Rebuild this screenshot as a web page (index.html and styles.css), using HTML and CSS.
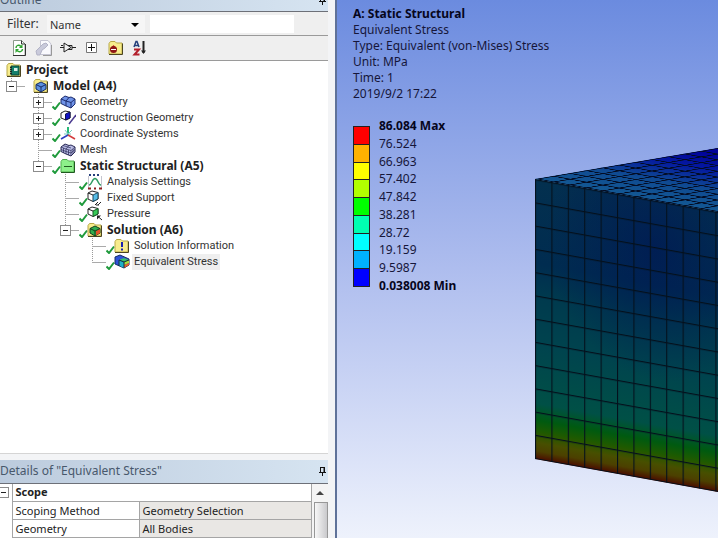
FILE: index.html
```html
<!DOCTYPE html>
<html lang="en">
<head>
    <meta charset="UTF-8">
    <meta name="viewport" content="width=device-width, initial-scale=1.0">
    <title>Mechanical</title>
    <link rel="stylesheet" href="styles.css">
</head>
<body>

<!-- shared icons -->
<svg class="defs" width="0" height="0">
    <symbol id="check" viewBox="0 0 9 9"><path d="M0.5 5.5L3 8L8 1.5" fill="none" stroke="#1f9a3c" stroke-width="2"/></symbol>
    <symbol id="folder" viewBox="0 0 16 16">
        <path d="M1 3.5L2.5 1.5H7L8.5 3H14V14H1Z" fill="#f7ec8c" stroke="#b9a848"/>
        <path d="M1 14.5H14.5V3.5" fill="none" stroke="#4b4520"/>
    </symbol>
    <symbol id="pin" viewBox="0 0 9 10"><path d="M2.5 1V6M2 1.5H7M1 6.5H8M4.5 7V10" fill="none" stroke="#111"/><path d="M5.5 1H7V6H5.5Z" fill="#111"/></symbol>
</svg>

<div class="app">
    <div class="sidebar">
        <section class="outline">
            <header class="panel-title">
                <span>Outline</span>
                <button class="pin-btn" aria-label="Pin outline"><svg width="9" height="10"><use href="#pin"/></svg></button>
            </header>

            <div class="filter-bar">
                <label for="filter">Filter:</label>
                <div class="select-wrap">
                    <select id="filter">
                        <option>Name</option>
                        <option>Tag</option>
                    </select>
                </div>
                <input type="text" class="filter-text" aria-label="Filter text">
            </div>

            <div class="toolbar">
                <button aria-label="Refresh">
                    <svg width="16" height="16" viewBox="0 0 16 16">
                        <path d="M2.5 0.5H10.5L14 4V15.5H2.5Z" fill="#fff" stroke="#8a9a8a"/>
                        <path d="M10.5 0.5V4H14M2 15.5H14.5V4" fill="none" stroke="#333"/>
                        <path d="M5 8C5 5 8 4.5 10 6.5M11.5 9C11.5 12 8 12.5 6 10.5" fill="none" stroke="#2fa52f" stroke-width="1.5"/>
                        <path d="M11.5 4V8H8ZM4.5 13V9H8Z" fill="#2fa52f"/>
                    </svg>
                </button>
                <button aria-label="Copy">
                    <svg width="17" height="16" viewBox="0 0 17 16">
                        <path d="M5.5 0.5H13L16 4V14.5H5.5Z" fill="#f9f9fd" stroke="#c5c5d2"/>
                        <path d="M1 11L8 4L11 3L13 5L10 8L7 10L5 15H2Z" fill="#c9cadb" stroke="#b2b3c6"/>
                        <path d="M8 15.5H16.5V5" fill="none" stroke="#999"/>
                    </svg>
                </button>
                <button aria-label="Connections">
                    <svg width="16" height="16" viewBox="0 0 16 16">
                        <path d="M0 7.5H4M4 3V12L11 7.5ZM3 5.5H1M8 5.5H12V9.5H8M12 7.5H16" fill="none" stroke="#222"/>
                    </svg>
                </button>
                <button aria-label="Expand all">
                    <svg width="16" height="16" viewBox="0 0 16 16">
                        <path d="M2.5 2.5H12.5V12.5H2.5Z" fill="#fff" stroke="#777"/>
                        <path d="M4 7.5H11M7.5 4V11" stroke="#111"/>
                    </svg>
                </button>
                <button aria-label="Hide">
                    <svg width="16" height="16" viewBox="0 0 16 16">
                        <use href="#folder"/>
                        <path d="M2 9H9L5.5 5Z" fill="#c31b1b"/>
                        <circle cx="5.5" cy="9.500" r="3.500" fill="#8e1515"/>
                        <path d="M3 9.500H8" stroke="#fff" stroke-width="1"/>
                    </svg>
                </button>
                <button aria-label="Sort">
                    <svg width="16" height="16" viewBox="0 0 16 16">
                        <path d="M2 7L4 1.5H5L7 7M3 5.5H7" fill="none" stroke="#26407c" stroke-width="1.5"/>
                        <path d="M2 9.500H7L2.5 14.5H7.5" fill="none" stroke="#b3202c" stroke-width="2"/>
                        <path d="M11.5 1V13" stroke="#222" stroke-width="2"/>
                        <path d="M9 10.5H14L11.5 14Z" fill="#222"/>
                    </svg>
                </button>
            </div>

            <div class="tree">
                <div class="row root">
                    <svg class="icon" width="16" height="16" viewBox="0 0 16 16">
                        <use href="#folder"/>
                        <path d="M5 4H13V13H5Z" fill="#14806a" stroke="#0b4438"/>
                        <path d="M8 6H11.5V9H8Z" fill="#d8efe6"/>
                        <path d="M4 5.5H6M4 7.5H6M4 9.5H6M4 11.5H6" stroke="#222"/>
                    </svg>
                    <strong>Project</strong>
                </div>
                <ul>
                    <li>
                        <div class="row">
                            <button class="toggle open" aria-label="Collapse"></button>
                            <span class="check"></span>
                            <svg class="icon" width="16" height="16" viewBox="0 0 16 16">
                                <use href="#folder"/>
                                <path d="M3 6.5L8 4L13 6.5V11L8 14L3 11Z" fill="#5b8fe0" stroke="#152c66"/>
                                <path d="M3 6.5L8 9L13 6.5M8 9V14" fill="none" stroke="#152c66"/>
                            </svg>
                            <strong>Model (A4)</strong>
                        </div>
                        <ul>
                            <li>
                                <div class="row">
                                    <button class="toggle" aria-label="Expand"></button>
                                    <svg class="check"><use href="#check"/></svg>
                                    <svg class="icon" width="16" height="16" viewBox="0 0 16 16">
                                        <path d="M1 5L5 2L9 3.5L11 3L15 5V10L11 14L6 12L1 9.5Z" fill="#6f93e8" stroke="#1d2c6e"/>
                                        <path d="M1 5L6 7L9 3.5M6 7V12M6 7L11 8.5L15 5M11 8.5V14" fill="none" stroke="#1d2c6e"/>
                                    </svg>
                                    <span>Geometry</span>
                                </div>
                            </li>
                            <li>
                                <div class="row">
                                    <button class="toggle" aria-label="Expand"></button>
                                    <svg class="check"><use href="#check"/></svg>
                                    <svg class="icon" width="16" height="16" viewBox="0 0 16 16">
                                        <path d="M1 3L5 1L10 2V8L6 10L1 8Z" fill="#fff" stroke="#222"/>
                                        <path d="M5.5 4L10 2V8L5.5 10Z" fill="#1414c8" stroke="#111150"/>
                                        <path d="M9 14L16 5" stroke="#4a3a90" stroke-width="1.5"/>
                                    </svg>
                                    <span>Construction Geometry</span>
                                </div>
                            </li>
                            <li>
                                <div class="row">
                                    <button class="toggle" aria-label="Expand"></button>
                                    <svg class="check"><use href="#check"/></svg>
                                    <svg class="icon" width="16" height="16" viewBox="0 0 16 16">
                                        <path d="M8 9V1" stroke="#28b878" stroke-width="2"/>
                                        <path d="M5 4L8 8L12 4M4 8H11" fill="none" stroke="#74cfc0"/>
                                        <path d="M8 9L1 13" stroke="#2a3ec0" stroke-width="1.5"/>
                                        <path d="M8 9L15 13" stroke="#d23b3b" stroke-width="1.5"/>
                                    </svg>
                                    <span>Coordinate Systems</span>
                                </div>
                            </li>
                            <li>
                                <div class="row">
                                    <span class="branch"></span>
                                    <svg class="check"><use href="#check"/></svg>
                                    <svg class="icon" width="16" height="16" viewBox="0 0 16 16">
                                        <path d="M1 5L5 2L9 3.5L11 3L15 5V10L11 14L6 12L1 9.5Z" fill="#b9bce6" stroke="#2a2a55"/>
                                        <path d="M1 5L6 7L9 3.5M6 7V12M6 7L11 8.5L15 5M11 8.5V14M1 7.5L6 9.5L11 11L15 7.5M3.5 6V11M8.5 8V13M13 7V12M3 3.5L11 6" fill="none" stroke="#2a2a55" stroke-width="0.7"/>
                                    </svg>
                                    <span>Mesh</span>
                                </div>
                            </li>
                            <li>
                                <div class="row">
                                    <button class="toggle open" aria-label="Collapse"></button>
                                    <svg class="check"><use href="#check"/></svg>
                                    <svg class="icon" width="16" height="16" viewBox="0 0 16 16">
                                        <path d="M1 3.5L2.5 1.5H7L8.5 3H14V14H1Z" fill="#8df08a" stroke="#4fae4c"/>
                                        <path d="M1 14.5H14.5V3.5M4 8.5H12" fill="none" stroke="#1f5a1f"/>
                                    </svg>
                                    <strong>Static Structural (A5)</strong>
                                </div>
                                <ul>
                                    <li>
                                        <div class="row">
                                            <span class="branch"></span>
                                            <svg class="check"><use href="#check"/></svg>
                                            <svg class="icon" width="16" height="16" viewBox="0 0 16 16">
                                                <path d="M1.5 2V14M14.5 2V14" stroke="#c5c5cf"/>
                                                <path d="M2 11C5 11 5 4.5 8 4.5C11 4.5 11 11 14 11" fill="none" stroke="#2f9a62" stroke-width="1.5"/>
                                                <path d="M2 1H4M6 1H8M10 1H12" stroke="#26407c" stroke-width="2"/>
                                                <path d="M1 14.5H4M7 14.5H9M12 14.5H15" stroke="#8e2020" stroke-width="2"/>
                                            </svg>
                                            <span>Analysis Settings</span>
                                        </div>
                                    </li>
                                    <li>
                                        <div class="row">
                                            <span class="branch"></span>
                                            <svg class="check"><use href="#check"/></svg>
                                            <svg class="icon" width="16" height="16" viewBox="0 0 16 16">
                                                <path d="M1 3L5 1L11 2.5V9L6 11.5L1 9Z" fill="#fff" stroke="#222"/>
                                                <path d="M6 5L11 2.5V9L6 11.5Z" fill="#55bde8" stroke="#1c4a60"/>
                                                <path d="M1 3L6 5M8 15L11 12M11 15L14 12M9 15H12" stroke="#222"/>
                                            </svg>
                                            <span>Fixed Support</span>
                                        </div>
                                    </li>
                                    <li>
                                        <div class="row">
                                            <span class="branch"></span>
                                            <svg class="check"><use href="#check"/></svg>
                                            <svg class="icon" width="16" height="16" viewBox="0 0 16 16">
                                                <path d="M1 3L5 1L11 2.5V8L6 10.5L1 8Z" fill="#fff" stroke="#222"/>
                                                <path d="M6 5L11 2.5V8L6 10.5Z" fill="#36c956" stroke="#145a24"/>
                                                <path d="M1 3L6 5M11 10.5L15 14" stroke="#222"/>
                                                <path d="M10 9.5H14L10 13.5Z" fill="#222"/>
                                            </svg>
                                            <span>Pressure</span>
                                        </div>
                                    </li>
                                    <li>
                                        <div class="row">
                                            <button class="toggle open" aria-label="Collapse"></button>
                                            <svg class="check"><use href="#check"/></svg>
                                            <svg class="icon" width="16" height="16" viewBox="0 0 16 16">
                                                <use href="#folder"/>
                                                <path d="M3 6.5L8 4L13 6.5V11L8 14L3 11Z" fill="#2fae4e" stroke="#173e1c"/>
                                                <path d="M9 9L13 7V11L9 13.5Z" fill="#e2542a"/>
                                                <path d="M3 6.5L8 9L13 6.5M8 9V14" fill="none" stroke="#173e1c"/>
                                            </svg>
                                            <strong>Solution (A6)</strong>
                                        </div>
                                        <ul>
                                            <li>
                                                <div class="row">
                                                    <span class="branch"></span>
                                                    <svg class="check"><use href="#check"/></svg>
                                                    <svg class="icon" width="16" height="16" viewBox="0 0 16 16">
                                                        <use href="#folder"/>
                                                        <path d="M8 4V9M8 10.5V12.5" stroke="#1a22b0" stroke-width="2"/>
                                                    </svg>
                                                    <span>Solution Information</span>
                                                </div>
                                            </li>
                                            <li>
                                                <div class="row selected">
                                                    <span class="branch"></span>
                                                    <svg class="check"><use href="#check"/></svg>
                                                    <svg class="icon" width="16" height="16" viewBox="0 0 16 16">
                                                        <path d="M1 3L6 1L15 5V11L10 14L1 10Z" fill="#2f52d8" stroke="#152c66"/>
                                                        <path d="M5 6L10 4L15 6L10 8Z" fill="#35c26a"/>
                                                        <path d="M5 6L10 8V14L5 11.5Z" fill="#1fb0c8"/>
                                                        <path d="M10 8L15 6V9L10 11Z" fill="#a6e03a"/>
                                                        <path d="M10 11L15 9V11L10 14Z" fill="#e8622a"/>
                                                        <path d="M5 6L10 8L15 6M10 8V14M5 6V12" fill="none" stroke="#152c3c"/>
                                                    </svg>
                                                    <span>Equivalent Stress</span>
                                                </div>
                                            </li>
                                        </ul>
                                    </li>
                                </ul>
                            </li>
                        </ul>
                    </li>
                </ul>
            </div>
        </section>

        <section class="details">
            <header class="panel-title">
                <span>Details of "Equivalent Stress"</span>
                <button class="pin-btn" aria-label="Pin details"><svg width="9" height="10"><use href="#pin"/></svg></button>
            </header>
            <div class="details-body">
                <table>
                    <colgroup>
                        <col class="col-gutter">
                        <col class="col-name">
                        <col>
                    </colgroup>
                    <tr>
                        <td class="gutter"><button class="toggle open" aria-label="Collapse"></button></td>
                        <th colspan="2">Scope</th>
                    </tr>
                    <tr>
                        <td class="gutter"></td>
                        <td>Scoping Method</td>
                        <td class="value">Geometry Selection</td>
                    </tr>
                    <tr>
                        <td class="gutter"></td>
                        <td>Geometry</td>
                        <td class="value">All Bodies</td>
                    </tr>
                </table>
                <div class="scrollbar">
                    <button class="scroll-up" aria-label="Scroll up"></button>
                    <div class="thumb"></div>
                </div>
            </div>
        </section>
    </div>

    <main class="viewer">
        <svg class="model" width="400" height="538" viewBox="0 0 400 538">
            <defs>
                <linearGradient id="front" x1="0" y1="0" x2="0" y2="1">
                    <stop offset="0" stop-color="#03304f"/>
                    <stop offset="0.3" stop-color="#002c50"/>
                    <stop offset="0.42" stop-color="#003a4e"/>
                    <stop offset="0.6" stop-color="#00444e"/>
                    <stop offset="0.8" stop-color="#005046"/>
                    <stop offset="0.86" stop-color="#005a10"/>
                    <stop offset="0.9" stop-color="#1e5a00"/>
                    <stop offset="0.94" stop-color="#474f00"/>
                    <stop offset="0.97" stop-color="#4c4000"/>
                    <stop offset="1" stop-color="#4a0a00"/>
                </linearGradient>
                <radialGradient id="cold" gradientUnits="userSpaceOnUse" cx="0" cy="0" r="100" gradientTransform="translate(120 50) scale(1.1 1.3)">
                    <stop offset="0" stop-color="#001a54" stop-opacity="0.8"/>
                    <stop offset="1" stop-color="#001a54" stop-opacity="0"/>
                </radialGradient>
                <linearGradient id="top" gradientUnits="userSpaceOnUse" x1="0" y1="0" x2="0" y2="170">
                    <stop offset="0" stop-color="#135893"/>
                    <stop offset="0.35" stop-color="#0f4a92"/>
                    <stop offset="0.7" stop-color="#0418a0"/>
                    <stop offset="1" stop-color="#00009a"/>
                </linearGradient>
                <pattern id="front-mesh" width="16.4" height="23.25" patternUnits="userSpaceOnUse">
                    <path d="M0.5 0V24M0 0.5H17" stroke="#04101c" stroke-width="1.2" fill="none"/>
                </pattern>
                <pattern id="top-mesh" width="16.4" height="16.4" patternUnits="userSpaceOnUse">
                    <path d="M1 0V17M0 1H17" stroke="#020c24" stroke-width="3" fill="none"/>
                </pattern>
            </defs>
            <g transform="matrix(1 0.18 1 -0.17 0 179)">
                <rect width="394" height="394" fill="url(#top)"/>
                <rect width="394" height="394" fill="url(#top-mesh)"/>
            </g>
            <g transform="matrix(1 0.18 0 1 0 179)">
                <rect width="400" height="280" fill="url(#front)"/>
                <rect width="400" height="280" fill="url(#cold)"/>
                <rect width="400" height="280" fill="url(#front-mesh)"/>
            </g>
        </svg>

        <div class="result-info">
            <strong>A: Static Structural</strong>
            <span>Equivalent Stress</span>
            <span>Type: Equivalent (von-Mises) Stress</span>
            <span>Unit: MPa</span>
            <span>Time: 1</span>
            <span>2019/9/2 17:22</span>
        </div>

        <div class="legend">
            <div class="legend-colors">
                <i class="c1"></i>
                <i class="c2"></i>
                <i class="c3"></i>
                <i class="c4"></i>
                <i class="c5"></i>
                <i class="c6"></i>
                <i class="c7"></i>
                <i class="c8"></i>
                <i class="c9"></i>
            </div>
            <div class="legend-values">
                <strong>86.084 Max</strong>
                <span>76.524</span>
                <span>66.963</span>
                <span>57.402</span>
                <span>47.842</span>
                <span>38.281</span>
                <span>28.72</span>
                <span>19.159</span>
                <span>9.5987</span>
                <strong>0.038008 Min</strong>
            </div>
        </div>
    </main>
</div>

</body>
</html>
```
FILE: styles.css
```css
* {
    box-sizing: border-box;
}
body {
    margin: 0;
    font-family: "Noto Sans", sans-serif;
    font-size: 11px;
    line-height: 16px;
    color: #333;
    overflow: hidden;
}
button {
    padding: 0;
    border: none;
    background: none;
    cursor: pointer;
}
svg {
    display: block;
}
.defs {
    position: absolute;
}
.app {
    display: flex;
    height: 100vh;
}

/* left side */
.sidebar {
    flex: none;
    width: 337px;
    display: flex;
    flex-direction: column;
    gap: 6px;
    padding-right: 7px;
    background-color: #f3f4f6;
    border-right: 2px solid #5f7299;
}
.outline {
    flex: 1;
    min-height: 0;
    margin-top: -12px;
    display: flex;
    flex-direction: column;
}
.panel-title {
    display: flex;
    justify-content: space-between;
    align-items: center;
    height: 24px;
    padding-right: 1px;
    font-size: 12px;
    color: #48586c;
    background: linear-gradient(to right, #bccbdd, #d6e4f1);
    border-bottom: 1px solid #6d7078;
}
.filter-bar {
    display: flex;
    align-items: center;
    height: 24px;
    padding: 3px 34px 3px 7px;
    background-color: #efefef;
    border-bottom: 1px solid #9a9a9a;
}
.filter-bar label {
    width: 40px;
    font-size: 12px;
}
.select-wrap {
    position: relative;
    width: 98px;
    margin-right: 5px;
}
.select-wrap::after {
    content: "";
    position: absolute;
    right: 6px;
    top: 8px;
    border: 4px solid transparent;
    border-top-color: #000;
    border-bottom: none;
    pointer-events: none;
}
.filter-bar select {
    display: block;
    width: 100%;
    height: 18px;
    padding: 2px 3px 0;
    border: none;
    background-color: #f6f6f6;
    color: #333;
    font: inherit;
    appearance: none;
}
.filter-text {
    flex: 1;
    min-width: 0;
    height: 18px;
    border: none;
    background-color: #fff;
    font: inherit;
}
.toolbar {
    display: flex;
    align-items: center;
    gap: 8px;
    height: 25px;
    padding-left: 11px;
    background-color: #efefef;
    border-bottom: 1px solid #9a9a9a;
}

/* tree */
.tree {
    flex: 1;
    min-height: 0;
    padding-top: 1px;
    background-color: #fff;
    border-bottom: 1px solid #d5d5d5;
    overflow: hidden;
}
.tree ul {
    list-style: none;
    margin: 0;
    padding-left: 27px;
}
.tree > ul {
    padding-left: 0;
}
.tree li {
    background: repeating-linear-gradient(#999 0 1px, #fff 1px 2px) 11px 0 / 1px 100% no-repeat;
}
.tree li:last-child {
    background-size: 1px 8px;
}
.row {
    display: flex;
    align-items: center;
    height: 16px;
    padding-left: 6px;
    font-family: Roboto, sans-serif;
    white-space: nowrap;
}
.row .icon {
    flex: none;
    margin-right: 2px;
}
.row .icon + * {
    padding: 0 2px;
}
.row strong {
    font-family: "Noto Sans", sans-serif;
    font-size: 12px;
    color: #222;
}
.row.selected .icon + * {
    background-color: #efefef;
}
.toggle {
    flex: none;
    position: relative;
    width: 11px;
    height: 11px;
    background:
        linear-gradient(#222, #222) center / 5px 1px no-repeat,
        linear-gradient(#222, #222) center / 1px 5px no-repeat,
        #fff;
    border: 1px solid #8c8c8c;
}
.toggle.open {
    background: linear-gradient(#222, #222) center / 5px 1px no-repeat, #fff;
}
.row .toggle {
    margin-right: 8px;
}
.row .toggle::after {
    content: "";
    position: absolute;
    left: 10px;
    top: 4px;
    width: 8px;
    height: 1px;
    background-color: #aaa;
}
.branch {
    width: 14px;
    height: 1px;
    margin-left: 5px;
    background-color: #aaa;
}
.check {
    flex: none;
    width: 9px;
    height: 9px;
    margin-top: 6px;
    margin-right: -1px;
}

/* details */
.details-body {
    display: flex;
    background-color: #fff;
}
.details table {
    flex: 1;
    width: 100%;
    min-width: 0;
    border-collapse: collapse;
    table-layout: fixed;
    color: #222;
}
.col-gutter {
    width: 12px;
}
.col-name {
    width: 127px;
}
.details th,
.details td {
    height: 18px;
    padding: 0 3px;
    line-height: 16px;
    text-align: left;
    border: 1px solid #a5a5a5;
    border-top: none;
}
.details .gutter {
    padding: 0;
    border-bottom: none;
    border-left: none;
}
.details .value {
    background-color: #e9e7e4;
}
.gutter .toggle {
    display: block;
    margin-left: -2px;
}
.scrollbar {
    flex: 0 0 16px;
    display: flex;
    flex-direction: column;
    background-color: #f4f4f4;
}
.scroll-up {
    height: 18px;
}
.scroll-up::before {
    content: "";
    display: block;
    width: 0;
    margin: 0 auto;
    border: 4px solid transparent;
    border-bottom-color: #444;
    border-top: none;
}
.thumb {
    flex: 1;
    margin-left: 2px;
    background: linear-gradient(to right, #f7f7f7, #c9c9cc);
    border: 1px solid #979797;
    border-bottom: none;
}

/* graphics window */
.viewer {
    flex: 1;
    min-width: 0;
    position: relative;
    padding: 6px 16px;
    font-size: 12px;
    color: #16163a;
    background: linear-gradient(#6b8bdf, #aebdee 50%, #eef2fc);
    overflow: hidden;
}
.viewer strong {
    color: #06061c;
}
.model {
    position: absolute;
    left: 198px;
    top: 0;
}
.result-info {
    display: flex;
    flex-direction: column;
}
.legend {
    display: flex;
    gap: 9px;
    height: 176px;
    margin-top: 16px;
}
.legend-colors {
    display: flex;
    flex-direction: column;
    width: 17px;
    margin: 8px 0 7px;
    border: 1px solid #222;
}
.legend-colors i {
    flex: 1;
}
.legend-colors i + i {
    border-top: 1px solid #222;
}
.legend-values {
    display: flex;
    flex-direction: column;
    justify-content: space-between;
}
.c1 { background-color: #ff0000; }
.c2 { background-color: #ffb200; }
.c3 { background-color: #ffff00; }
.c4 { background-color: #b2ff00; }
.c5 { background-color: #00ff00; }
.c6 { background-color: #00ffb2; }
.c7 { background-color: #00ffff; }
.c8 { background-color: #00b2ff; }
.c9 { background-color: #0000ff; }
```
